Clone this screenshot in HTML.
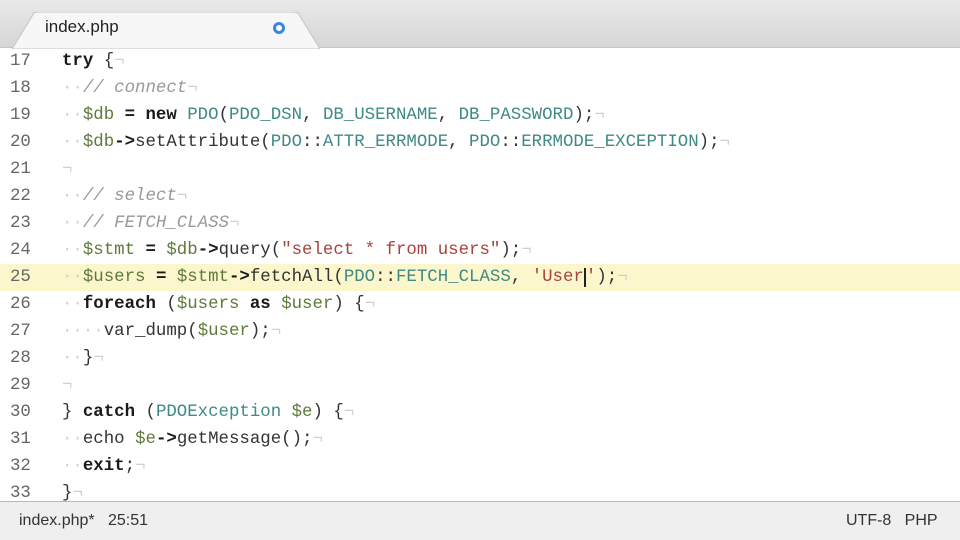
<!DOCTYPE html>
<html><head><meta charset="utf-8"><style>
*{margin:0;padding:0;box-sizing:border-box}
body{width:960px;height:540px;overflow:hidden;background:#fff;font-family:"Liberation Sans",sans-serif;position:relative}
#tabbar{position:absolute;left:0;top:0;width:960px;height:48px;background:linear-gradient(#e9e9e9,#d6d6d6);border-bottom:1px solid #c4c4c4}
#tab{position:absolute;left:12px;top:12px;width:310px;height:37px}
#tabtxt{position:absolute;left:45px;top:17px;font-size:17px;color:#222}
#dot{position:absolute;left:273px;top:22px;width:12px;height:12px;border-radius:50%;border:3px solid #3c85e8;background:#fff}
#code{position:absolute;left:0;top:47.5px;width:960px}
.l{height:27px;line-height:27px;position:relative;font-family:"Liberation Mono",monospace;font-size:17.4px;color:#333;white-space:pre}
.n{position:absolute;left:10px;width:30px;color:#666}
.c{position:absolute;left:62px}
.hl{background:#fbf6cc}
.v{color:#5e7a3a}.k{font-weight:bold;color:#1a1a1a}.t{color:#3f8a85}.s{color:#a8433c}.m{color:#999;font-style:italic}.i{color:#d0d0d0}
#status{position:absolute;left:0;top:501px;width:960px;height:39px;background:#efefef;border-top:1px solid #b8b8b8;font-size:16px;color:#333}
#status span{position:absolute;top:10px}
.cur{border-right:2px solid #222}
</style></head><body>
<div id="tabbar">
<svg id="tab" width="310" height="37"><path d="M0 37 L22 1 Q24 0 28 0 L280 0 Q284 0 286 1 L308 37 Z" fill="#f7f7f7" stroke="#c4c4c4"/></svg>
<div id="tabtxt">index.php</div><div id="dot"></div>
</div>
<div id="code">
<div class="l"><span class="n">17</span><span class="c"><span class="k">try</span> {<span class="i">¬</span></span></div>
<div class="l"><span class="n">18</span><span class="c"><span class="i">··</span><span class="m">// connect</span><span class="i">¬</span></span></div>
<div class="l"><span class="n">19</span><span class="c"><span class="i">··</span><span class="v">$db</span> <span class="k">=</span> <span class="k">new</span> <span class="t">PDO</span>(<span class="t">PDO_DSN</span>, <span class="t">DB_USERNAME</span>, <span class="t">DB_PASSWORD</span>);<span class="i">¬</span></span></div>
<div class="l"><span class="n">20</span><span class="c"><span class="i">··</span><span class="v">$db</span><span class="k">-&gt;</span>setAttribute(<span class="t">PDO</span>::<span class="t">ATTR_ERRMODE</span>, <span class="t">PDO</span>::<span class="t">ERRMODE_EXCEPTION</span>);<span class="i">¬</span></span></div>
<div class="l"><span class="n">21</span><span class="c"><span class="i">¬</span></span></div>
<div class="l"><span class="n">22</span><span class="c"><span class="i">··</span><span class="m">// select</span><span class="i">¬</span></span></div>
<div class="l"><span class="n">23</span><span class="c"><span class="i">··</span><span class="m">// FETCH_CLASS</span><span class="i">¬</span></span></div>
<div class="l"><span class="n">24</span><span class="c"><span class="i">··</span><span class="v">$stmt</span> <span class="k">=</span> <span class="v">$db</span><span class="k">-&gt;</span>query(<span class="s">"select * from users"</span>);<span class="i">¬</span></span></div>
<div class="l hl"><span class="n">25</span><span class="c"><span class="i">··</span><span class="v">$users</span> <span class="k">=</span> <span class="v">$stmt</span><span class="k">-&gt;</span>fetchAll(<span class="t">PDO</span>::<span class="t">FETCH_CLASS</span>, <span class="s"><span class="cur">'User</span>'</span>);<span class="i">¬</span></span></div>
<div class="l"><span class="n">26</span><span class="c"><span class="i">··</span><span class="k">foreach</span> (<span class="v">$users</span> <span class="k">as</span> <span class="v">$user</span>) {<span class="i">¬</span></span></div>
<div class="l"><span class="n">27</span><span class="c"><span class="i">····</span>var_dump(<span class="v">$user</span>);<span class="i">¬</span></span></div>
<div class="l"><span class="n">28</span><span class="c"><span class="i">··</span>}<span class="i">¬</span></span></div>
<div class="l"><span class="n">29</span><span class="c"><span class="i">¬</span></span></div>
<div class="l"><span class="n">30</span><span class="c">} <span class="k">catch</span> (<span class="t">PDOException</span> <span class="v">$e</span>) {<span class="i">¬</span></span></div>
<div class="l"><span class="n">31</span><span class="c"><span class="i">··</span>echo <span class="v">$e</span><span class="k">-&gt;</span>getMessage();<span class="i">¬</span></span></div>
<div class="l"><span class="n">32</span><span class="c"><span class="i">··</span><span class="k">exit</span>;<span class="i">¬</span></span></div>
<div class="l"><span class="n">33</span><span class="c">}<span class="i">¬</span></span></div>
</div>
<div id="status"><span style="left:19px">index.php*&nbsp;&nbsp;&nbsp;25:51</span><span style="left:846px">UTF-8&nbsp;&nbsp;&nbsp;PHP</span></div>
</body></html>
